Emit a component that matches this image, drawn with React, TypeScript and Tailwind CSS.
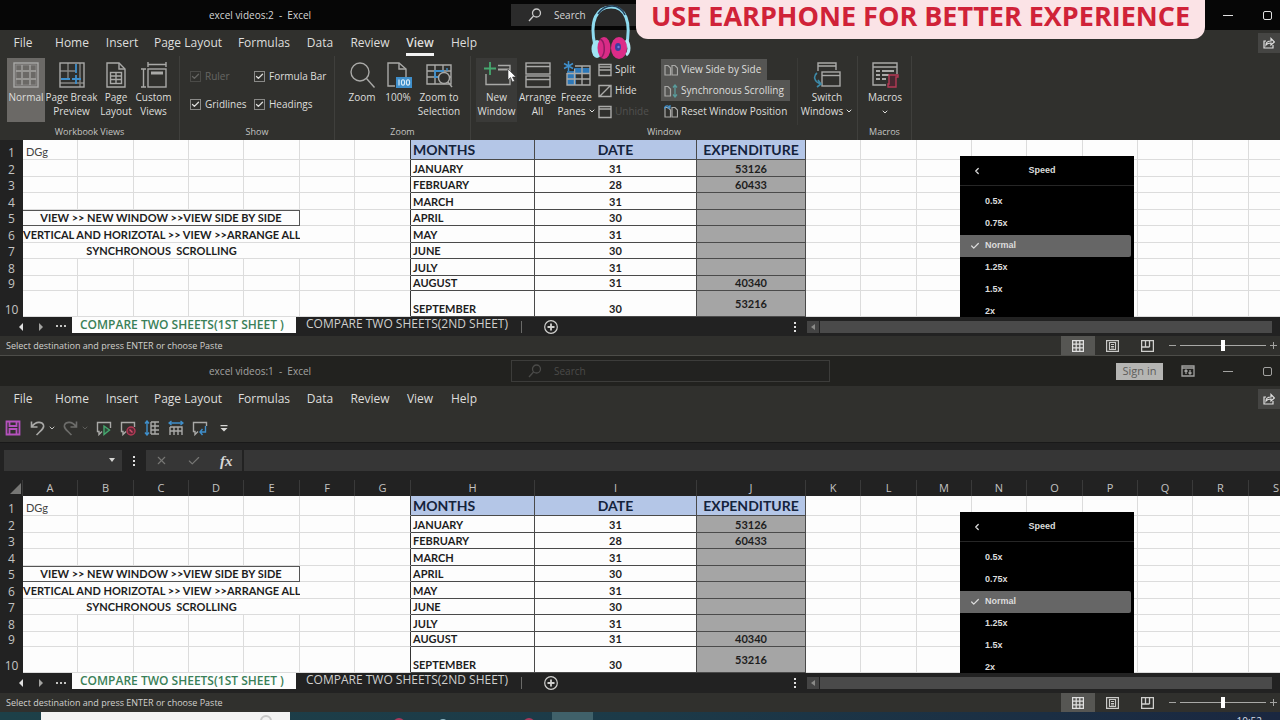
import type { ReactNode } from "react";
import { Check, ChevronDown, ChevronLeft, X } from "lucide-react";

type IconProps = { children: ReactNode; size?: "lg" | "md" | "sm" };

// stroke based icon frame, drawn on the pixel size it is shown at
function Icon({ children, size = "lg" }: IconProps) {
  const px = size === "lg" ? 28 : size === "md" ? 16 : 14;
  return (
    <svg width={px} height={px} viewBox={`0 0 ${px} ${px}`} fill="none" stroke="#a9a9a7" strokeWidth="1.4" className="shrink-0" aria-hidden="true">
      {children}
    </svg>
  );
}

const GRAY = "#a9a9a7";
const BLUE = "#3f8fcb";

function NormalIcon() {
  return (
    <Icon>
      <rect x="2" y="2" width="24" height="24" />
      <path d="M4 10h20M4 18h20M10 4v20M18 4v20" strokeWidth="1.8" opacity="0.7" />
      <rect x="4" y="4" width="20" height="20" strokeWidth="1" opacity="0.5" />
    </Icon>
  );
}

function PageBreakIcon() {
  return (
    <Icon>
      <rect x="2" y="2" width="24" height="24" />
      <path d="M2 10h16M10 2v16M2 22h24M22 2v24" opacity="0.7" />
      <path d="M18 3v22M3 18h22" stroke={BLUE} strokeWidth="1.8" strokeDasharray="9 2" />
    </Icon>
  );
}

function PageLayoutIcon() {
  return (
    <Icon>
      <path d="M5 2h12l6 6v18H5z" />
      <path d="M17 2v6h6" />
      <rect x="8.5" y="11.500" width="11" height="11" />
      <path d="M8.500 15h11M8.500 18.500h11M14 11.500v11" />
    </Icon>
  );
}

function CustomViewsIcon() {
  return (
    <Icon>
      <path d="M8 1v5M26 1v5M8 3.500h18M1 8h5M1 26h5M3.500 8v18" />
      <rect x="8" y="8" width="18" height="18" />
      <path d="M11 12h12" strokeWidth="3" />
    </Icon>
  );
}

function ZoomIcon() {
  return (
    <Icon>
      <circle cx="12" cy="11" r="9" />
      <path d="M18.500 17.500l8 9" />
    </Icon>
  );
}

function HundredIcon() {
  return (
    <Icon>
      <path d="M11 25H4V2h11l7 6v8" />
      <path d="M15 2v6h7" />
      <rect x="12" y="16" width="16" height="11" fill={BLUE} stroke="none" />
      <path d="M15 18.500v6" stroke="#d7ebf8" strokeWidth="1.2" />
      <ellipse cx="19" cy="21.500" rx="1.600" ry="2.700" stroke="#d7ebf8" strokeWidth="1.1" />
      <ellipse cx="24" cy="21.500" rx="1.600" ry="2.700" stroke="#d7ebf8" strokeWidth="1.1" />
    </Icon>
  );
}

function ZoomSelectionIcon() {
  return (
    <Icon>
      <path d="M2 4h24v19H2zM2 10h24M2 16h24M10 4v19M18 4v19" />
      <path d="M10 10h8v6h-8z" stroke={BLUE} strokeWidth="1.800" />
      <circle cx="19" cy="17" r="5.500" fill="#2f2f2d" />
      <path d="M23 21l4 5" />
      <path d="M22 7v3" stroke={BLUE} />
    </Icon>
  );
}

function NewWindowIcon() {
  return (
    <Icon>
      <path d="M15 4.500h12v19H3V13" />
      <path d="M15 8.500h12" strokeWidth="2" />
      <path d="M7 1v13M1 7.500h12" stroke="#46a86f" strokeWidth="1.800" />
    </Icon>
  );
}

function ArrangeIcon() {
  return (
    <Icon>
      <rect x="2" y="2" width="24" height="11" />
      <rect x="2" y="15" width="24" height="11" />
      <path d="M2 5.500h24M2 18.500h24" />
    </Icon>
  );
}

function FreezeIcon() {
  return (
    <Icon>
      <path d="M4 7h23v17H4z" fill="#2d78b8" stroke="none" />
      <path d="M13 13h14v11H13z" fill="#30302e" stroke="none" />
      <path d="M12 5h15v19H4V12M4 12.500h23M4 18h23M11.500 8v16M19 5v19" />
      <rect x="0" y="0" width="11" height="10" fill="#2f2f2d" stroke="none" />
      <path d="M5.500 0v10M1 2.500l9 5M10 2.500l-9 5" stroke={BLUE} strokeWidth="1.500" />
    </Icon>
  );
}

function SwitchIcon() {
  return (
    <Icon>
      <path d="M5 10V2h18v7M5 5h18" />
      <rect x="9" y="11" width="18" height="14" />
      <path d="M9 14.500h18" />
      <path d="M4 12c-4 3-3 9 4 11M4 26l4-3-3-4" stroke="#3d8aa8" strokeWidth="1.600" />
    </Icon>
  );
}

function MacrosIcon() {
  return (
    <Icon>
      <path d="M15 24H2V2h24v11M2 6h24" />
      <path d="M5 10h4M5 14h4M5 18h4M11 10h12M11 14h7M11 18h4" strokeWidth="1.800" />
      <path d="M18 14h9v2h-2v10h-8v-3h1z" stroke="#b53a56" fill="#4a2831" />
    </Icon>
  );
}

function SplitIcon() {
  return (
    <Icon size="sm">
      <path d="M1 1.500h12v11H1zM1 7h12M1 4h12" />
    </Icon>
  );
}

function HideIcon() {
  return (
    <Icon size="sm">
      <path d="M1 1.500h12v11H1zM2 12L12 2" />
    </Icon>
  );
}

function UnhideIcon() {
  return (
    <Icon size="sm">
      <path d="M1 1.500h12v11H1zM1 4h12" />
    </Icon>
  );
}

function PagesIcon({ accent }: { accent?: "scroll" | "reset" }) {
  return (
    <Icon size="sm">
      <path d="M1 2.500h3l2.500 2.500v7H1z" strokeWidth="1.200" />
      {accent === "scroll" ? (
        <path d="M11 1v12M9 3.500l2-2.500 2 2.500M9 10.500l2 2.500 2-2.500" stroke="#5a9c9c" strokeWidth="1.300" />
      ) : (
        <path d="M8 2.500h3l2.500 2.500v7H8z" strokeWidth="1.200" />
      )}
      {accent === "reset" && <path d="M0 4c1-4 5-4 6-1M6 0v3H3" stroke={BLUE} strokeWidth="1.200" />}
    </Icon>
  );
}

function Headphones() {
  return (
    <svg width="42" height="56" viewBox="0 0 42 56" fill="none" aria-hidden="true" className="absolute top-1 left-[590px]">
      <path d="M5 42C-1 16 7 3 21 3s21 14 15 41" stroke="#8fdcf0" strokeWidth="3" />
      <path d="M8 10C12 4 17 2 22 2s10 3 13 9" stroke="#24405c" strokeWidth="1.500" />
      <ellipse cx="7" cy="45" rx="5.500" ry="9" fill="#9fe3f4" />
      <path d="M36 36c4 4 4 12 0 15" stroke="#b7e9f6" strokeWidth="3" />
      <ellipse cx="14" cy="44" rx="6.500" ry="11" fill="#d92b86" />
      <path d="M10 35c5 2 6 14 1 19" stroke="#8f1b62" strokeWidth="1.500" />
      <ellipse cx="29" cy="44" rx="8" ry="11" fill="#dc2c88" />
      <ellipse cx="28" cy="43" rx="3" ry="4" fill="#3a3f9e" />
      <circle cx="28.500" cy="43" r="1.200" fill="#6f7ce0" />
    </svg>
  );
}

const MENU = [
  { name: "File", width: "w-[46px]" },
  { name: "Home", width: "w-[52px]" },
  { name: "Insert", width: "w-[48px]" },
  { name: "Page Layout", width: "w-[84px]" },
  { name: "Formulas", width: "w-[68px]" },
  { name: "Data", width: "w-[44px]" },
  { name: "Review", width: "w-[56px]" },
  { name: "View", width: "w-[44px]" },
  { name: "Help", width: "w-[44px]" },
];

function TitleBar({ title, active }: { title: string; active: boolean }) {
  return (
    <header className={`flex h-[30px] items-center text-[10px] ${active ? "bg-[#060606] text-[#d6d6d6]" : "bg-[#22221f] text-[#a3a3a1]"}`}>
      <h1 className="ml-[209px] w-[302px] whitespace-pre">{title}</h1>
      <label className={`flex h-[22px] w-[319px] items-center border pl-4 ${active ? "border-[#2b2b2b] bg-[#2b2b2b]" : "border-[#3c3c3a] bg-[#222220]"}`}>
        <svg width="14" height="14" viewBox="0 0 14 14" fill="none" stroke={active ? "#c9c9c9" : "#4b4b49"} strokeWidth="1.300" aria-hidden="true">
          <circle cx="8.500" cy="5" r="4" />
          <path d="M5.500 8L1 13" />
        </svg>
        <input
          aria-label="Search"
          placeholder="Search"
          className={`ml-3 w-60 bg-transparent text-[10px] outline-none ${active ? "placeholder:text-[#d6d6d6]" : "placeholder:text-[#4b4b49]"}`}
        />
      </label>
      <div className="ml-auto flex items-center">
        {!active && (
          <>
            <button className="mr-[18px] h-[17px] w-[47px] bg-[#b5b5b3] text-[11px] leading-4 text-[#5c5c5a]">Sign in</button>
            <button aria-label="Ribbon display options" className="mr-[28px]">
              <svg width="14" height="12" viewBox="0 0 14 12" fill="none" stroke="#a3a3a1" strokeWidth="1.300">
                <path d="M1 1h12v10H1zM1 3h12M5 9V5M3.500 6.500L5 5l1.500 1.500M9 5v4M7.500 7.500L9 9l1.500-1.500" />
              </svg>
            </button>
          </>
        )}
        <button aria-label="Minimize" className="mr-[30px] flex h-5 w-[10px] items-center">
          <span className={`h-px w-full ${active ? "bg-[#e0e0e0]" : "bg-[#a3a3a1]"}`} />
        </button>
        <button aria-label="Maximize" className={`mr-2 h-[9px] w-[9px] rounded-[2px] border ${active ? "border-[#e0e0e0]" : "border-[#a3a3a1]"}`} />
      </div>
    </header>
  );
}

function MenuBar({ current }: { current?: string }) {
  return (
    <nav className="flex h-[26px] items-center bg-[#30302d] text-[12px] text-[#dededc]">
      {MENU.map((m) => (
        <button key={m.name} className={`flex h-full flex-col items-center justify-between whitespace-nowrap ${m.width}`}>
          <span className={`leading-[26px] ${current === m.name ? "font-semibold" : ""}`}>{m.name}</span>
          {current === m.name && <span className="-mt-1 h-[3px] w-7 shrink-0 bg-[#f2f2f2]" />}
        </button>
      ))}
      <button aria-label="Share" className="ml-auto flex h-5 w-[22px] items-center justify-center bg-[#454543]">
        <svg width="12" height="12" viewBox="0 0 12 12" fill="none" stroke="#e0e0e0" strokeWidth="1.200">
          <path d="M3 4H1v7h9V8M3 8c0-3 2-4 5-4V1.500L11.500 5 8 8V6C6 6 4 6.500 3 8z" />
        </svg>
      </button>
    </nav>
  );
}

type BigButtonProps = { icon: ReactNode; lines: string[]; width: string; state?: "on" | "hover"; menu?: boolean };

function BigButton({ icon, lines, width, state, menu }: BigButtonProps) {
  const bg = state === "on" ? "bg-[#6b6966]" : state === "hover" ? "bg-[#3a3a38]" : "";
  return (
    <button className={`flex h-16 shrink-0 flex-col items-center pt-[3px] ${width} ${bg}`}>
      {icon}
      <span className="mt-px block text-center leading-[14px] whitespace-nowrap">
        {lines.map((line, i) => (
          <span key={line} className="flex items-center justify-center">
            {line}
            {menu && i === lines.length - 1 && lines.length > 1 && <ChevronDown size={8} strokeWidth={3} className="ml-[2px]" />}
          </span>
        ))}
        {menu && lines.length === 1 && <ChevronDown size={8} strokeWidth={3} className="mx-auto mt-1" />}
      </span>
    </button>
  );
}

function SmallButton({ icon, label, on, muted }: { icon: ReactNode; label: string; on?: boolean; muted?: boolean }) {
  return (
    <button
      disabled={muted}
      className={`flex h-[21px] items-center gap-[3px] pr-[6px] pl-[3px] whitespace-nowrap ${on ? "bg-[#555553]" : ""} ${muted ? "text-[#51514f]" : ""}`}
    >
      {icon}
      {label}
    </button>
  );
}

function TickBox({ label, disabled }: { label: string; disabled?: boolean }) {
  return (
    <label className={`flex items-center gap-1 leading-4 ${disabled ? "opacity-30" : ""}`}>
      <span className="grid">
        <input
          type="checkbox"
          defaultChecked
          disabled={disabled}
          className="peer h-[11px] w-[11px] appearance-none border border-[#8a8a88] [grid-area:1/1]"
        />
        <Check size={9} strokeWidth={3.5} className="pointer-events-none invisible m-px [grid-area:1/1] peer-checked:visible" />
      </span>
      {label}
    </label>
  );
}

function Group({ label, width, inset, children }: { label: string; width: string; inset: string; children: ReactNode }) {
  return (
    <section className={`flex shrink-0 flex-col border-r border-[#3f3f3c] ${width}`}>
      <div className={`flex h-[69px] pt-[2px] ${inset}`}>{children}</div>
      <h2 className="text-center text-[9px] leading-[14px] text-[#c4c4c2]">{label}</h2>
    </section>
  );
}

function Ribbon() {
  return (
    <div className="flex h-[84px] overflow-hidden bg-[#30302d] text-[10px] font-medium text-[#dededc]">
      <Group label="Workbook Views" width="w-[180px]" inset="pl-[7px]">
        <BigButton icon={<NormalIcon />} lines={["Normal"]} width="w-[38px]" state="on" />
        <BigButton icon={<PageBreakIcon />} lines={["Page Break", "Preview"]} width="w-[53px]" />
        <BigButton icon={<PageLayoutIcon />} lines={["Page", "Layout"]} width="w-[36px]" />
        <BigButton icon={<CustomViewsIcon />} lines={["Custom", "Views"]} width="w-[39px]" />
      </Group>
      <Group label="Show" width="w-[155px]" inset="pl-[10px]">
        <div className="grid grid-cols-[64px_auto] content-start gap-y-3 pt-[10px]">
          <TickBox label="Ruler" disabled />
          <TickBox label="Formula Bar" />
          <TickBox label="Gridlines" />
          <TickBox label="Headings" />
        </div>
      </Group>
      <Group label="Zoom" width="w-[136px]" inset="pl-[8px]">
        <BigButton icon={<ZoomIcon />} lines={["Zoom"]} width="w-[38px]" />
        <BigButton icon={<HundredIcon />} lines={["100%"]} width="w-[34px]" />
        <BigButton icon={<ZoomSelectionIcon />} lines={["Zoom to", "Selection"]} width="w-[48px]" />
      </Group>
      <Group label="Window" width="w-[387px]" inset="pl-[5px]">
        <BigButton icon={<NewWindowIcon />} lines={["New", "Window"]} width="w-[41px]" state="hover" />
        <BigButton icon={<ArrangeIcon />} lines={["Arrange", "All"]} width="w-[41px]" />
        <BigButton icon={<FreezeIcon />} lines={["Freeze", "Panes"]} width="w-[37px]" menu />
        <div className="flex w-[66px] flex-col pt-px">
          <SmallButton icon={<SplitIcon />} label="Split" />
          <SmallButton icon={<HideIcon />} label="Hide" />
          <SmallButton icon={<UnhideIcon />} label="Unhide" muted />
        </div>
        <div className="flex w-[137px] flex-col items-start border-r border-[#3a3a37] pt-px">
          <SmallButton icon={<PagesIcon />} label="View Side by Side" on />
          <SmallButton icon={<PagesIcon accent="scroll" />} label="Synchronous Scrolling" on />
          <SmallButton icon={<PagesIcon accent="reset" />} label="Reset Window Position" />
        </div>
        <BigButton icon={<SwitchIcon />} lines={["Switch", "Windows"]} width="w-[58px]" menu />
      </Group>
      <Group label="Macros" width="w-[54px]" inset="pl-[2px]">
        <BigButton icon={<MacrosIcon />} lines={["Macros"]} width="w-[50px]" menu />
      </Group>
    </div>
  );
}

function QuickAccess() {
  return (
    <div className="flex h-[30px] items-center bg-[#30302d] pt-[2px] pl-[5px] text-[#c4c4c2]">
      <button aria-label="Save">
        <Icon size="md">
          <path d="M1.500 1.500h13v13h-13zM4.500 2v4h7V2M4.500 14v-5h7v5" stroke="#b552bd" strokeWidth="1.800" />
        </Icon>
      </button>
      <button aria-label="Undo" className="ml-[9px]">
        <Icon size="md">
          <path d="M1.500 1.500v5.500h6M2 6.500C6 1 12 1.500 13.500 5c1 3-2 5-7 10" strokeWidth="1.600" />
        </Icon>
      </button>
      <ChevronDown size={8} strokeWidth={3} className="ml-[2px]" />
      <button aria-label="Redo" disabled className="ml-[6px] opacity-50">
        <Icon size="md">
          <path d="M14.500 1.500v5.500h-6M14 6.500C10 1 4 1.500 2.500 5c-1 3 2 5 7 10" strokeWidth="1.600" />
        </Icon>
      </button>
      <ChevronDown size={8} strokeWidth={3} className="ml-[3px] opacity-30" />
      <button aria-label="Show comments" className="ml-[7px]">
        <Icon size="md">
          <path d="M6 11.500l-3 3v-3H1.500V2.500h13V8" />
          <path d="M8 6l5.500 4L8 14.500z" stroke="#46a86f" fill="#2f4a3a" />
        </Icon>
      </button>
      <button aria-label="Delete comment" className="ml-[8px]">
        <Icon size="md">
          <path d="M6 11.500l-3 3v-3H1.500V2.500h13V7" />
          <circle cx="11" cy="11" r="4" stroke="#b53a56" fill="#5d2836" />
          <path d="M9.500 9.500l3 3" stroke="#d44d6b" />
        </Icon>
      </button>
      <button aria-label="Row height" className="ml-[8px]">
        <Icon size="md">
          <path d="M3 1v14M1 3.500L3 1l2 2.500M1 12.500L3 15l2-2.500" stroke={BLUE} />
          <path d="M7 2h8M7 6h8M7 10h8M7 14h8M7 2v12M11 2v12" stroke={GRAY} />
        </Icon>
      </button>
      <button aria-label="Column width" className="ml-[8px]">
        <Icon size="md">
          <path d="M1 3h14M3.500 1L1 3l2.500 2M12.500 1L15 3l-2.500 2" stroke={BLUE} />
          <path d="M2 7h12v8M2 7v8M6 7v8M10 7v8M2 11h12" stroke={GRAY} />
        </Icon>
      </button>
      <button aria-label="Next comment" className="ml-[8px]">
        <Icon size="md">
          <path d="M6 11.500l-3 3v-3H1.500V2.500h13V6" />
          <path d="M13.500 6v6H8M10.500 9L8 12l2.500 3" stroke={BLUE} />
        </Icon>
      </button>
      <button aria-label="Customize toolbar" className="ml-[11px]">
        <svg width="10" height="10" viewBox="0 0 10 10" fill="#d6d6d4">
          <path d="M1.500 2h7v1.200h-7zM1.500 5h7L5 8.500z" />
        </svg>
      </button>
    </div>
  );
}

function FormulaBar() {
  return (
    <div className="flex h-[38px] items-center border-t border-[#191919] bg-[#222222] pb-[2px] pl-1 text-[#777775]">
      <label className="flex h-[21px] w-[118px] items-center bg-[#363636]">
        <input aria-label="Name box" className="w-[104px] bg-transparent px-1 text-[11px] text-white outline-none" />
        <svg width="8" height="5" viewBox="0 0 8 5" fill="#d6d6d4" aria-hidden="true">
          <path d="M1 0h6L4 4z" />
        </svg>
      </label>
      <VerticalDots className="mx-[10px]" />
      <div className="flex h-[21px] w-[96px] items-center justify-around bg-[#363636]">
        <button aria-label="Cancel"><X size={13} /></button>
        <button aria-label="Enter"><Check size={14} /></button>
        <button className="font-['Liberation_Serif',serif] text-[15px] leading-5 font-bold text-[#d6d6d4] italic">fx</button>
      </div>
      <input aria-label="Formula" className="ml-[2px] h-[21px] min-w-0 flex-1 bg-[#363636] px-2 text-[11px] text-white outline-none" />
    </div>
  );
}

function VerticalDots({ className }: { className: string }) {
  return (
    <svg width="4" height="12" viewBox="0 0 4 12" fill="#e0e0e0" aria-hidden="true" className={`shrink-0 ${className}`}>
      <path d="M1 1h2v2H1zM1 5h2v2H1zM1 9h2v2H1z" />
    </svg>
  );
}

const COLUMNS = [
  { name: "A", width: "w-[55px]" },
  { name: "B", width: "w-[56px]" },
  { name: "C", width: "w-[55px]" },
  { name: "D", width: "w-[55px]" },
  { name: "E", width: "w-[56px]" },
  { name: "F", width: "w-[55px]" },
  { name: "G", width: "w-[56px]" },
  { name: "H", width: "w-[124px]" },
  { name: "I", width: "w-[162px]" },
  { name: "J", width: "w-[109px]" },
  { name: "K", width: "w-[55px]" },
  { name: "L", width: "w-[56px]" },
  { name: "M", width: "w-[55px]" },
  { name: "N", width: "w-[55px]" },
  { name: "O", width: "w-[56px]" },
  { name: "P", width: "w-[55px]" },
  { name: "Q", width: "w-[55px]" },
  { name: "R", width: "w-[56px]" },
  { name: "S", width: "w-[55px]" },
];

type Row = { height: string; month: string; days: string; spent?: string; note?: string };

const ROWS: Row[] = [
  { height: "h-[20px]", month: "MONTHS", days: "DATE", spent: "EXPENDITURE" },
  { height: "h-[17px]", month: "JANUARY", days: "31", spent: "53126" },
  { height: "h-[16px]", month: "FEBRUARY", days: "28", spent: "60433" },
  { height: "h-[17px]", month: "MARCH", days: "31" },
  { height: "h-[16px]", month: "APRIL", days: "30", note: "VIEW >> NEW WINDOW >>VIEW SIDE BY SIDE" },
  { height: "h-[17px]", month: "MAY", days: "31", note: "VERTICAL AND HORIZOTAL >> VIEW >>ARRANGE ALL>" },
  { height: "h-[16px]", month: "JUNE", days: "30", note: "SYNCHRONOUS  SCROLLING" },
  { height: "h-[17px]", month: "JULY", days: "31" },
  { height: "h-[15px]", month: "AUGUST", days: "31", spent: "40340" },
  { height: "h-[26px]", month: "SEPTEMBER", days: "30", spent: "53216" },
];

const EMPTY_CELL = "border-r border-b border-[#dcdcdc]";

function Sheet({ headings }: { headings: boolean }) {
  return (
    <div className="relative overflow-hidden bg-[#fdfdfd]">
      <table className="w-full table-fixed border-separate border-spacing-0 text-[11px] leading-[14px] text-[#1d1d1d]">
        <colgroup>
          <col className="w-[23px]" />
          {COLUMNS.map((c) => (
            <col key={c.name} className={c.width} />
          ))}
        </colgroup>
        {headings && (
          <thead className="bg-[#222222] text-[#c4c4c2]">
            <tr className="h-4">
              <th className="border-r border-[#3a3a3a] p-0">
                <svg width="12" height="11" viewBox="0 0 12 11" fill="#777775" className="ml-auto" aria-label="Select all">
                  <path d="M11 0v11H0z" />
                </svg>
              </th>
              {COLUMNS.map((c) => (
                <th key={c.name} className="border-r border-[#3a3a3a] p-0 font-medium">{c.name}</th>
              ))}
            </tr>
          </thead>
        )}
        <tbody className="font-['Lato',sans-serif]">
          {ROWS.map((row, i) => {
            const head = i === 0;
            const last = i === ROWS.length - 1;
            const cell = head ? "bg-[#b4c6e7] text-[14px] text-[#14233c] align-middle" : "align-bottom";
            const spentCell = head ? cell : last ? "bg-[#a5a5a5] align-middle" : "bg-[#a5a5a5] align-bottom";
            const boxed = i === 4 ? "border-t border-r border-b border-[#555]" : "border-b border-[#dcdcdc]";
            return (
              <tr key={row.month} className={row.height}>
                <th className="bg-[#222222] p-0 align-bottom font-['Open_Sans',sans-serif] text-[12px] font-medium text-[#c4c4c2]">{i + 1}</th>
                {row.note ? (
                  <td colSpan={5} className={`overflow-hidden p-0 text-center align-bottom font-bold whitespace-pre ${boxed}`}>
                    {row.note}
                  </td>
                ) : (
                  COLUMNS.slice(0, 5).map((c) => (
                    <td key={c.name} className={`p-0 pl-[3px] align-bottom text-[#444] ${EMPTY_CELL}`}>{head && c.name === "A" ? "DGg" : ""}</td>
                  ))
                )}
                <td className={EMPTY_CELL} />
                <td className="border-r border-b border-r-[#333] border-b-[#dcdcdc]" />
                <td className={`border-r border-b border-[#4a4a4a] p-0 pl-[2px] font-bold ${cell}`}>{row.month}</td>
                <td className={`border-r border-b border-[#4a4a4a] p-0 text-center font-bold ${cell}`}>{row.days}</td>
                <td className={`border-r border-b border-[#4a4a4a] p-0 text-center font-bold ${spentCell}`}>{row.spent}</td>
                {COLUMNS.slice(10).map((c) => (
                  <td key={c.name} className={EMPTY_CELL} />
                ))}
              </tr>
            );
          })}
        </tbody>
      </table>
      <SpeedMenu />
    </div>
  );
}

const SPEEDS = ["0.5x", "0.75x", "Normal", "1.25x", "1.5x", "2x"];

// picture pasted on the sheet, floats over the cells
function SpeedMenu() {
  return (
    <div className="absolute bottom-0 left-[960px] h-[161px] w-[174px] overflow-hidden bg-black font-['Liberation_Sans',sans-serif] text-[9px] font-bold text-[#dcdcdc]">
      <div className="flex h-[30px] items-center border-b border-[#262626] px-3">
        <button aria-label="Back"><ChevronLeft size={10} strokeWidth={3} /></button>
        <span className="flex-1 pr-5 text-center">Speed</span>
      </div>
      <ul className="pt-[5px] pr-[3px]">
        {SPEEDS.map((speed) => (
          <li key={speed}>
            <button className={`flex h-[22px] w-full items-center pl-[10px] ${speed === "Normal" ? "rounded-r-[2px] bg-[#666666]" : ""}`}>
              <span className="w-[15px]">{speed === "Normal" && <Check size={10} strokeWidth={3} />}</span>
              {speed}
            </button>
          </li>
        ))}
      </ul>
    </div>
  );
}

function SheetTabs({ height }: { height: string }) {
  return (
    <div className={`flex items-center bg-[#222222] text-[12px] text-[#d0d0ce] ${height}`}>
      <div className="flex w-[72px] shrink-0 items-center pl-[18px]">
        <button aria-label="Previous sheet">
          <svg width="6" height="8" viewBox="0 0 6 8" fill="#e0e0e0"><path d="M5 0v8L1 4z" /></svg>
        </button>
        <button aria-label="Next sheet" className="ml-[14px]">
          <svg width="6" height="8" viewBox="0 0 6 8" fill="#a3a3a1"><path d="M1 0v8l4-4z" /></svg>
        </button>
        <svg width="10" height="3" viewBox="0 0 10 3" fill="#c4c4c2" className="ml-[12px]" aria-hidden="true">
          <path d="M0 0h2v2H0zM4 0h2v2H4zM8 0h2v2H8z" />
        </svg>
      </div>
      <button className="h-4 w-[224px] shrink-0 self-start bg-[#fdfdfd] pl-2 text-left leading-[14px] font-semibold whitespace-nowrap text-[#3a8058]">
        COMPARE TWO SHEETS(1ST SHEET )
      </button>
      <button className="w-[222px] shrink-0 self-start leading-[14px] whitespace-nowrap">COMPARE TWO SHEETS(2ND SHEET)</button>
      <span className="ml-[3px] h-3 w-px bg-[#6a6a68]" />
      <button aria-label="New sheet" className="ml-[22px]">
        <svg width="14" height="14" viewBox="0 0 14 14" fill="none" stroke="#d0d0ce" strokeWidth="1.200">
          <circle cx="7" cy="7" r="6.300" />
          <path d="M7 3.500v7M3.500 7h7" strokeWidth="1.800" />
        </svg>
      </button>
      <VerticalDots className="ml-[235px]" />
      <div className="ml-[10px] flex h-3 min-w-0 flex-1 gap-px pr-1">
        <button aria-label="Scroll left" className="flex w-3 items-center justify-center bg-[#444444]">
          <svg width="4" height="6" viewBox="0 0 4 6" fill="#8a8a88"><path d="M4 0v6L0 3z" /></svg>
        </button>
        <div className="mr-1 flex-1 bg-[#4a4a4a]" />
      </div>
    </div>
  );
}

function StatusBar() {
  return (
    <footer className="flex h-[19px] items-center bg-[#30302d] pl-[6px] text-[#d0d0ce]">
      <p className="text-[9px] leading-4 font-medium">Select destination and press ENTER or choose Paste</p>
      <div className="ml-auto flex h-full items-center">
        <button aria-label="Normal view" className="flex h-full w-[34px] items-center justify-center bg-[#565653]">
          <svg width="12" height="12" viewBox="0 0 12 12" fill="none" stroke="#e0e0e0" strokeWidth="1.200">
            <path d="M.6.600h10.800v10.800H.600zM4.200 0v12M7.800 0v12M0 4.200h12M0 7.800h12" />
          </svg>
        </button>
        <button aria-label="Page layout view" className="ml-[11px]">
          <svg width="13" height="12" viewBox="0 0 13 12" fill="none" stroke="#c9c9c7" strokeWidth="1.200">
            <path d="M.6.600h11.800v10.800H.600zM3.500 2.500h6v7h-6zM5 4.500h3M5 6.500h3M5 8h3" />
          </svg>
        </button>
        <button aria-label="Page break view" className="ml-[22px]">
          <svg width="13" height="12" viewBox="0 0 13 12" fill="none" stroke="#d0d0ce" strokeWidth="1.300">
            <path d="M.6.600h11.800v10.800H.600zM4.500 1v6M8.500 1v6M1 7h7.500" />
          </svg>
        </button>
        <button aria-label="Zoom out" className="ml-[15px] h-px w-[7px] bg-[#a3a3a1]" />
        <input
          type="range"
          aria-label="Zoom"
          defaultValue={50}
          className="mx-[4px] h-[11px] w-[86px] appearance-none bg-[linear-gradient(#a9a9a7,#a9a9a7)] bg-[length:100%_1px] bg-center bg-no-repeat [&::-webkit-slider-thumb]:h-[11px] [&::-webkit-slider-thumb]:w-1 [&::-webkit-slider-thumb]:appearance-none [&::-webkit-slider-thumb]:bg-white"
        />
        <button aria-label="Zoom in" className="mr-[3px]">
          <svg width="7" height="7" viewBox="0 0 7 7" stroke="#a3a3a1"><path d="M3.500 0v7M0 3.500h7" /></svg>
        </button>
      </div>
    </footer>
  );
}

function Taskbar() {
  return (
    <div className="flex h-10 items-start bg-linear-to-r from-[#1d4048] via-[#1c3a48] to-[#1a2740] pl-[41px]">
      <div className="h-8 w-[249px] shrink-0 bg-[#f2f2f2]">
        <span className="mt-[3px] ml-[219px] block h-4 w-3 rounded-full border-2 border-[#c8c8c8]" />
      </div>
      <span className="mt-[6px] ml-[103px] h-3 w-3 rounded-full bg-[#a8395c]" />
      <span className="mt-[7px] ml-[34px] h-3 w-2 rounded-full bg-[#8fb6c4]" />
      <span className="mt-[6px] ml-[76px] h-3 w-3 rounded-full bg-[#a8395c]" />
      <span className="ml-[17px] h-full w-[41px] bg-[#40616a]" />
      <time className="mt-[2px] mr-[18px] ml-auto text-[10px] leading-[14px] text-[#d6dce6]">10:52</time>
    </div>
  );
}

export default function App() {
  return (
    <main className="relative h-screen overflow-hidden bg-[#222222] font-['Open_Sans',sans-serif]">
      <div className="border-b border-[#4d4d49]">
        <TitleBar title="excel videos:2  -  Excel" active />
        <MenuBar current="View" />
        <Ribbon />
        <Sheet headings={false} />
        <SheetTabs height="h-[19px]" />
        <StatusBar />
      </div>
      <div>
        <TitleBar title="excel videos:1  -  Excel" active={false} />
        <MenuBar />
        <QuickAccess />
        <FormulaBar />
        <Sheet headings />
        <SheetTabs height="h-[20px]" />
        <StatusBar />
      </div>
      <Taskbar />

      <Headphones />
      <p className="absolute top-0 left-[636px] flex h-[39px] w-[569px] items-center justify-center rounded-b-xl bg-[#fbe3e6] pb-2 text-[27px] leading-8 font-bold whitespace-nowrap text-[#d02238]">
        USE EARPHONE FOR BETTER EXPERIENCE
      </p>
      {/* mouse pointer */}
      <svg width="10" height="15" viewBox="0 0 10 15" fill="#ffffff" stroke="#333333" strokeWidth="0.600" aria-hidden="true" className="absolute top-[68px] left-[507px]">
        <path d="M1 1v11l2.500-2.500L5.500 14l2-1-2-4H9z" />
      </svg>
    </main>
  );
}
